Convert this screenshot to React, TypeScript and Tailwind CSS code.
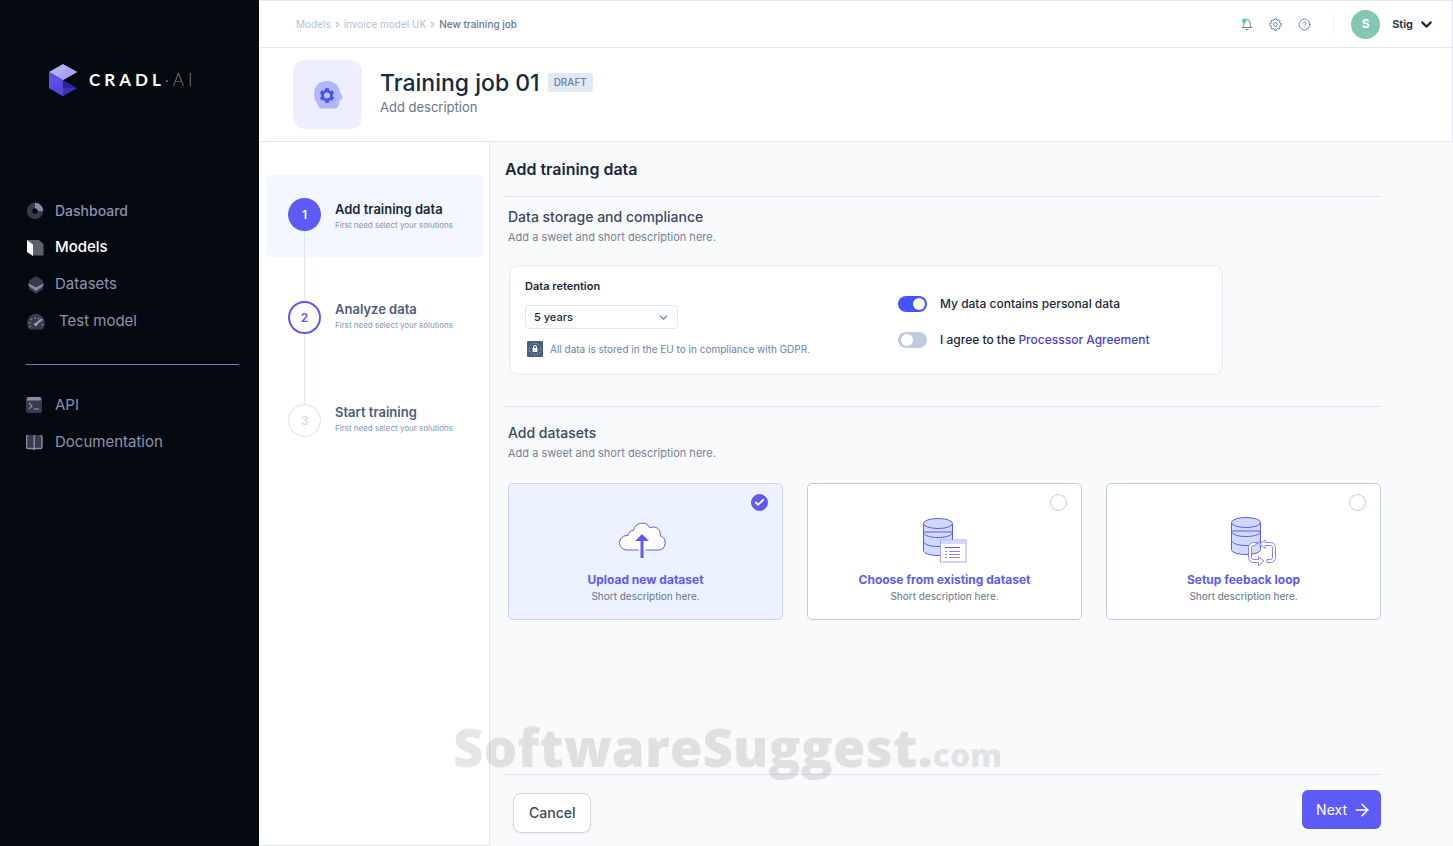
import { useState } from "react";
import type { ReactNode } from "react";
import clsx from "clsx";
import { ArrowRight, Check, ChevronDown, ChevronRight, CircleHelp } from "lucide-react";

type StepState = "active" | "next" | "upcoming";

interface Step {
  title: string;
  state: StepState;
}

interface DatasetOption {
  id: string;
  title: string;
  icon: ReactNode;
}

// Closed outline of a cog, centred on (cx, cy)
function cogPath(cx: number, cy: number, teeth: number, outer: number, inner: number) {
  const points: string[] = [];
  const step = (Math.PI * 2) / teeth;
  for (let i = 0; i < teeth; i++) {
    const a = i * step - Math.PI / 2;
    const corners: [number, number][] = [
      [inner, a - step * 0.3],
      [outer, a - step * 0.2],
      [outer, a + step * 0.2],
      [inner, a + step * 0.3],
    ];
    corners.forEach(([r, t]) => {
      points.push(`${(cx + r * Math.cos(t)).toFixed(2)} ${(cy + r * Math.sin(t)).toFixed(2)}`);
    });
  }
  return `M${points.join("L")}Z`;
}

function LogoMark() {
  return (
    <svg width="28" height="32" viewBox="0 0 28 32" aria-hidden="true">
      <path d="M14 0 28 8 14 16 0 8Z" fill="#b4aff5" />
      <path d="M14 16 8 12 20 3.5 28 8Z" fill="#a9a3f1" />
      <path d="M0 8 14 16V32L0 24Z" fill="#5a50ea" />
      <path d="M0 24 14 16V32Z" fill="#5348df" />
      <path d="M14 16 28 24 14 32Z" fill="#2c2496" />
      <path d="M14 24H28L14 32Z" fill="#3d33b8" />
    </svg>
  );
}

const navIcons = {
  dashboard: (
    <svg width="18" height="18" viewBox="0 0 18 18" aria-hidden="true">
      <circle cx="9" cy="9" r="5.5" fill="none" stroke="#363c4e" strokeWidth="5.4" />
      <path d="M9 3.5A5.5 5.5 0 0 1 14.5 9" fill="none" stroke="#8a8ca8" strokeWidth="5.4" />
    </svg>
  ),
  models: (
    <svg width="18" height="18" viewBox="0 0 18 18" aria-hidden="true">
      <path d="M1 1H13L17.5 5V16.5H7L1 12Z" fill="#5c606d" />
      <path d="M1 1 7 5.5V17L1 13Z" fill="#fff" />
    </svg>
  ),
  datasets: (
    <svg width="18" height="18" viewBox="0 0 18 18" aria-hidden="true">
      <path d="M10 0 17 4.5V13L10 18 3 13V4.5Z" fill="#363c4e" />
      <path d="M2.5 7.5 10 11.5 17.5 7.5V9.8L10 15 2.5 9.8Z" fill="#8a8ca8" />
    </svg>
  ),
  test: (
    <svg width="22" height="18" viewBox="0 0 22 18" aria-hidden="true">
      <path d="M4 16.5A9 9 0 1 1 16 16.5Z" fill="#363c4e" />
      <path d="M4 14.2A6.6 6.6 0 1 1 16 14.2" fill="none" stroke="#8a8ca8" strokeWidth="1.6" strokeDasharray="1.3 2.5" />
      <path d="M9.5 11.5 15.5 6.5" stroke="#a0a2ba" strokeWidth="1.8" strokeLinecap="round" />
      <circle cx="9.7" cy="11.3" r="1.6" fill="#a0a2ba" />
    </svg>
  ),
  api: (
    <svg width="18" height="18" viewBox="0 1 18 18" aria-hidden="true">
      <rect width="16" height="16" y="1" rx="2" fill="#363c4e" />
      <path d="M1 4.5V3A2 2 0 0 1 3 1H13A2 2 0 0 1 15 3V4.5Z" fill="#8a8ca8" />
      <path d="M3 7 6 10 3 13" fill="none" stroke="#8a8ca8" strokeWidth="1.3" />
      <path d="M8 13H13" stroke="#8a8ca8" strokeWidth="1.3" />
    </svg>
  ),
  docs: (
    <svg width="18" height="18" viewBox="0 1 18 18" aria-hidden="true">
      <path d="M1 2H7L8 3 9 2H15L16 3V15.5H0V3Z" fill="#363c4e" />
      <path
        d="M2 2.5C1 2.8.5 3.3.5 4V14C.5 15 1 15.5 2 15.5H6.5L8 16.5 9.5 15.5H14.5C15.5 15.5 16 15 16 14V4C16 3.3 15.5 2.8 14.5 2.5M8.2 2V16"
        fill="none"
        stroke="#8a8ca8"
        strokeWidth="1.4"
      />
    </svg>
  ),
};

const mainNav = [
  { label: "Dashboard", icon: navIcons.dashboard, className: "text-sm font-medium text-[#8f91ad]" },
  { label: "Models", icon: navIcons.models, className: "text-[15px] font-medium text-white" },
  { label: "Datasets", icon: navIcons.datasets, className: "text-[15px] text-[#8f91ad]" },
  { label: "Test model", icon: navIcons.test, className: "text-[15px] text-[#8f91ad]" },
];

const helpNav = [
  { label: "API", icon: navIcons.api, className: "text-[15px] text-[#8f91ad]" },
  { label: "Documentation", icon: navIcons.docs, className: "text-[15px] text-[#8f91ad]" },
];

function NavList({ items }: { items: typeof mainNav }) {
  return (
    <ul>
      {items.map((item) => (
        <li key={item.label}>
          <a href="#" className={clsx("flex h-[37px] items-center gap-[11px]", item.className)}>
            {item.icon}
            {item.label}
          </a>
        </li>
      ))}
    </ul>
  );
}

function Sidebar() {
  return (
    <aside className="w-[259px] shrink-0 bg-[#050910]">
      <a href="#" className="flex items-center gap-3 pt-16 pl-[49px] font-['Lato',sans-serif]">
        <LogoMark />
        <span className="flex items-center text-[17px] leading-8 tracking-[4px] whitespace-nowrap">
          <b className="font-bold text-white">CRADL</b>
          <span className="font-light text-[#7d808a]">·AI</span>
        </span>
      </a>
      <nav className="mt-24 px-5 pl-[26px]">
        <NavList items={mainNav} />
        <hr className="mt-6 mb-[22px] border-[#6b83a8]" />
        <NavList items={helpNav} />
      </nav>
    </aside>
  );
}

function BellIcon() {
  return (
    <svg width="12" height="13" viewBox="0 0 12 13" aria-hidden="true">
      <path
        d="M1 9.5H11M2.2 9.5C2.8 8.5 2.7 7 2.8 5A3.2 3.4 0 0 1 9.2 5C9.3 7 9.2 8.5 9.8 9.5M5 11.5H7"
        fill="none"
        stroke="#6b83a8"
        strokeWidth="1"
        strokeLinecap="round"
      />
      <circle cx="3.2" cy="2.8" r="2.2" fill="#3ddc97" />
    </svg>
  );
}

function CogIcon() {
  return (
    <svg width="13" height="13" viewBox="0 0 13 13" aria-hidden="true">
      <g fill="none" stroke="#6b83a8" strokeLinejoin="round">
        <path d={cogPath(6.5, 6.5, 8, 5.8, 4.7)} />
        <circle cx="6.5" cy="6.5" r="1.8" />
      </g>
    </svg>
  );
}

function TopBar() {
  return (
    <div className="flex h-[47px] items-center justify-between border-b border-[#e1e8f3] pr-[17px] pl-[37px]">
      <nav aria-label="Breadcrumb" className="flex items-center text-[10px] text-[#b3bfd2]">
        <a href="#">Models</a>
        <ChevronRight size={9} strokeWidth={3} className="mx-[2px]" />
        <a href="#">invoice model UK</a>
        <ChevronRight size={9} strokeWidth={3} className="mx-[2px]" />
        <span className="font-medium text-[#64799c]">New training job</span>
      </nav>
      <div className="flex items-center">
        <div className="flex items-center gap-4">
          <button aria-label="Notifications">
            <BellIcon />
          </button>
          <button aria-label="Settings">
            <CogIcon />
          </button>
          <button aria-label="Help" className="text-[#6b83a8]">
            <CircleHelp size={13} strokeWidth={1.8} />
          </button>
        </div>
        <span className="mr-[17px] ml-[22px] h-[26px] w-px bg-[#edf1f7]" />
        <button className="flex items-center text-[11px] font-semibold text-[#1b2a41]">
          <span className="mr-3 flex size-[29px] items-center justify-center rounded-full bg-[#84c5b4] text-xs font-bold text-white">
            S
          </span>
          Stig
          <ChevronDown size={17} strokeWidth={3} className="ml-[5px]" />
        </button>
      </div>
    </div>
  );
}

function JobHeader() {
  return (
    <div className="flex h-[94px] items-center gap-[18px] border-b border-[#e1e8f3] pl-[34px]">
      <div className="flex size-[69px] items-center justify-center rounded-xl bg-[#edefff]">
        <svg width="30" height="28" viewBox="0 0 30 28" aria-hidden="true">
          <path
            d="M14 0C22 0 26.500 5 27 11.500L29.500 15.500C30 17 29.500 18 28 18.500L26.500 19.500C26.500 23.500 25 27.500 22.500 27.500H8.500C6.500 27.500 5.500 26 4.500 23C2 20 1 17 1 13.500C1 5 6 0 14 0Z"
            fill="#b1b8ff"
          />
          <path d={cogPath(14, 14.5, 6, 7, 5.4)} fill="#4353ff" stroke="#4353ff" strokeLinejoin="round" />
          <circle cx="14" cy="14.5" r="3" fill="#c3c8ff" />
        </svg>
      </div>
      <div className="pb-1">
        <div className="flex items-center gap-2">
          <h1 className="text-[23px] leading-7 font-medium text-[#172940]">Training job 01</h1>
          <span className="rounded-[3px] bg-[#e1e9f4] px-[6px] text-[10px] leading-[19px] font-medium text-[#6b83a8]">
            DRAFT
          </span>
        </div>
        <p className="text-[13px] leading-5 text-[#66758c]">Add description</p>
      </div>
    </div>
  );
}

const steps: Step[] = [
  { title: "Add training data", state: "active" },
  { title: "Analyze data", state: "next" },
  { title: "Start training", state: "upcoming" },
];

const circleStyles: Record<StepState, string> = {
  active: "bg-[#5e5af7] text-white",
  next: "border-2 border-[#5e5af7] bg-white text-[#5e5af7]",
  upcoming: "border border-[#d8e1ee] bg-white text-[#d3dcea]",
};

function StepList() {
  return (
    <ol className="w-[231px] shrink-0 border-r border-b border-[#e1e8f3] bg-white pt-[33px] pr-[6px] pl-[7px]">
      {steps.map((step, i) => (
        <li key={step.title} className="grid h-[103px] grid-cols-1">
          {step.state === "active" && (
            <span className="col-start-1 row-start-1 h-[82px] rounded bg-[#f4f7ff]" />
          )}
          <div className="col-start-1 row-start-1 flex gap-[14px] pt-[23px] pl-[22px]">
            <div className="flex flex-col items-center">
              <span
                className={clsx(
                  "flex size-[33px] shrink-0 items-center justify-center rounded-full text-xs font-semibold",
                  circleStyles[step.state]
                )}
              >
                {i + 1}
              </span>
              {i < steps.length - 1 && <span className="h-[70px] w-px shrink-0 bg-[#dfe6f3]" />}
            </div>
            <div className={clsx(step.state === "active" && "pt-[3px]")}>
              <h3
                className={clsx(
                  "text-[13px] leading-4 font-semibold",
                  step.state === "active" ? "text-[#172940]" : "text-[#4b5d7c]"
                )}
              >
                {step.title}
              </h3>
              <p className="mt-[2px] text-[8px] leading-3 whitespace-nowrap text-[#8296b8]">
                First need select your solutions
              </p>
            </div>
          </div>
        </li>
      ))}
    </ol>
  );
}

function Toggle({ id, checked, onChange, children }: { id: string; checked: boolean; onChange: () => void; children: ReactNode }) {
  return (
    <div className="flex h-4 items-center gap-[13px]">
      <input
        id={id}
        type="checkbox"
        role="switch"
        checked={checked}
        onChange={onChange}
        className="h-4 w-[29px] shrink-0 cursor-pointer appearance-none rounded-full bg-[#c0cbdd] px-[3px] py-[2px] before:block before:size-3 before:rounded-full before:bg-white checked:bg-[#4353ff] checked:pl-[15px]"
      />
      <label htmlFor={id} className="text-xs font-medium text-[#172940]">
        {children}
      </label>
    </div>
  );
}

function GdprIcon() {
  return (
    <svg width="16" height="16" viewBox="0 0 16 16" aria-hidden="true">
      <rect width="16" height="16" rx="1" fill="#4b5d7c" />
      <circle cx="8" cy="8" r="5.8" fill="none" stroke="#d5ddea" strokeWidth="1" strokeDasharray="1 2.03" />
      <rect x="5.5" y="7" width="5" height="4" fill="#fff" />
      <path d="M6.5 7V6A1.5 1.5 0 0 1 9.5 6V7" fill="none" stroke="#fff" />
    </svg>
  );
}

function StorageCard() {
  const [personal, setPersonal] = useState(true);
  const [agreed, setAgreed] = useState(false);

  return (
    <div className="mt-5 ml-[5px] flex h-[110px] max-w-[714px] rounded-[10px] border border-[#e1e8f6] bg-white">
      <div className="w-[388px] pt-3 pl-[15px]">
        <label htmlFor="retention" className="block text-[11px] leading-4 font-semibold text-[#172940]">
          Data retention
        </label>
        <div className="mt-[11px] grid w-[153px] items-center">
          <select
            id="retention"
            defaultValue="5"
            className="col-start-1 row-start-1 h-6 appearance-none rounded border border-[#dfe6f1] bg-white pl-2 text-[11px] font-medium text-[#172940]"
          >
            <option value="1">1 year</option>
            <option value="5">5 years</option>
            <option value="10">10 years</option>
          </select>
          <ChevronDown
            size={13}
            strokeWidth={2.5}
            className="pointer-events-none col-start-1 row-start-1 mr-2 justify-self-end text-[#6b83a8]"
          />
        </div>
        <p className="mt-3 flex items-center gap-[7px] pl-[2px] text-[10px] leading-4 whitespace-nowrap text-[#6b83a8]">
          <GdprIcon />
          All data is stored in the EU to in compliance with GDPR.
        </p>
      </div>
      <div className="flex flex-col gap-5 pt-[30px]">
        <Toggle id="personal" checked={personal} onChange={() => setPersonal(!personal)}>
          My data contains personal data
        </Toggle>
        <Toggle id="agree" checked={agreed} onChange={() => setAgreed(!agreed)}>
          I agree to the{" "}
          <a href="#" className="text-[#4a3fd0]">
            Processsor Agreement
          </a>
        </Toggle>
      </div>
    </div>
  );
}

function Cylinder() {
  return (
    <g stroke="#5e5af7" fill="none">
      <path d="M.5 5.5V32.5C.5 35.5 7 37.5 15 37.5S29.5 35.5 29.5 32.5V5.5Z" fill="#d0dafc" />
      <ellipse cx="15" cy="5.5" rx="14.5" ry="5" fill="#d0dafc" />
      <path d="M.5 14H29.5M.5 15C2 18 8 19.5 15 19.5S28 18 29.5 15M.5 23.5C2 27 8 28.5 15 28.5S28 27 29.5 23.5" />
    </g>
  );
}

const options: DatasetOption[] = [
  {
    id: "upload",
    title: "Upload new dataset",
    icon: (
      <svg width="56" height="40" viewBox="0 -1 56 40" aria-hidden="true">
        <path
          d="M20.5 28H8A7.3 7.3 0 0 1 8 13.5H10C10.3 10.5 12.5 8.5 15.5 8.3A8.8 8.8 0 0 1 32 6C38 3 43 7.5 42.3 14A7.2 7.2 0 0 1 40.5 28H27.5"
          fill="#fff"
          stroke="#5e5af7"
        />
        <path d="M24 12 31 19H25.5V36H22.5V19H17Z" fill="#5e5af7" />
      </svg>
    ),
  },
  {
    id: "existing",
    title: "Choose from existing dataset",
    icon: (
      <svg width="44" height="46" viewBox="0 0 44 46" aria-hidden="true">
        <Cylinder />
        <rect x="17.5" y="22" width="25.5" height="22" fill="#fff" stroke="#a5a2fa" />
        <rect x="18" y="22.5" width="24.5" height="3.5" fill="#d0dafc" />
        <path d="M22 29.5H37" stroke="#5e5af7" />
        <path d="M22 33.5H24M26 33.5H37M22 36.5H24M26 36.5H37M22 39.5H24M26 39.5H37" stroke="#8683f9" />
      </svg>
    ),
  },
  {
    id: "feedback",
    title: "Setup feeback loop",
    icon: (
      <svg width="65" height="52" viewBox="-20 -2 65 52" aria-hidden="true">
        <Cylinder />
        <g stroke="#8683f9" strokeWidth="1" fill="#fff" strokeLinejoin="round">
          <path d="M26 25.5H22.5A5 5 0 0 0 17.5 30.5V40.5A5 5 0 0 0 22.5 45.5H27.5V48.5L33 44 27.5 39.5V42.5H22.5A2 2 0 0 1 20.5 40.5V30.5A2 2 0 0 1 22.5 28.5H24Z" />
          <path d="M36 45.5H39.5A5 5 0 0 0 44.5 40.5V30.5A5 5 0 0 0 39.5 25.5H34V23L28.5 27 34 31.5V28.5H39.5A2 2 0 0 1 41.5 30.5V40.5A2 2 0 0 1 39.5 42.5H36Z" />
        </g>
      </svg>
    ),
  },
];

function DatasetPicker() {
  const [selected, setSelected] = useState("upload");

  return (
    <div className="mt-[22px] ml-1 grid grid-cols-3 gap-6">
      {options.map((option) => (
        <label
          key={option.id}
          className={clsx(
            "relative flex h-[137px] cursor-pointer flex-col items-center rounded-[5px] border pt-[29px]",
            selected === option.id ? "border-[#c7d1fb] bg-[#ecf2ff]" : "border-[#c0cbdd] bg-white"
          )}
        >
          <input
            type="radio"
            name="dataset"
            checked={selected === option.id}
            onChange={() => setSelected(option.id)}
            className="absolute top-[10px] right-[14px] size-[17px] appearance-none rounded-full border border-[#c0cbdd] bg-white checked:border-[#5e5af7] checked:bg-[#5e5af7]"
          />
          {selected === option.id && (
            <Check
              size={11}
              strokeWidth={4}
              className="pointer-events-none absolute top-[13px] right-[17px] text-white"
            />
          )}
          <span className="flex h-14 items-center">{option.icon}</span>
          <span className="mt-[3px] text-xs leading-4 font-bold text-[#5e5af7]">{option.title}</span>
          <span className="text-[10px] leading-4 text-[#66758c]">Short description here.</span>
        </label>
      ))}
    </div>
  );
}

function SectionTitle({ children }: { children: ReactNode }) {
  return (
    <div className="pl-1">
      <h3 className="text-sm leading-5 font-medium text-[#3a4961]">{children}</h3>
      <p className="mt-[2px] text-[11px] leading-4 text-[#738096]">Add a sweet and short description here.</p>
    </div>
  );
}

export default function App() {
  return (
    <div className="relative flex min-h-screen bg-[#f9fafc] font-['Inter',sans-serif]">
      <Sidebar />
      <div className="flex min-w-0 flex-1 flex-col">
        <header className="border-t border-r border-[#e1e8f3] bg-white">
          <TopBar />
          <JobHeader />
        </header>
        <div className="flex flex-1">
          <StepList />
          <main className="flex min-w-0 flex-1 flex-col pr-[72px] pl-[14px]">
            <h2 className="pt-[15px] pb-[15px] pl-px text-base leading-6 font-semibold text-[#172940]">Add training data</h2>
            <section className="border-t border-[#e1e6ed] pt-[10px] pb-[31px]">
              <SectionTitle>Data storage and compliance</SectionTitle>
              <StorageCard />
            </section>
            <section className="border-t border-[#e1e6ed] pt-4 pb-8">
              <SectionTitle>Add datasets</SectionTitle>
              <DatasetPicker />
            </section>
            <footer className="mt-auto flex items-start justify-between border-t border-[#e1e6ed] pt-[15px] pb-[13px] pl-[9px]">
              <button className="mt-[3px] h-10 rounded-lg border border-[#d0d4de] bg-white px-[15px] text-sm font-medium text-[#3a4961] shadow-xs">
                Cancel
              </button>
              <button className="flex h-[39px] items-center gap-[5px] rounded-md bg-[#5e5af7] pr-[9px] pl-[14px] text-sm text-white">
                Next
                <ArrowRight size={20} strokeWidth={1.8} />
              </button>
            </footer>
          </main>
        </div>
      </div>
      <div className="pointer-events-none absolute bottom-[59px] left-[453px] font-['Open_Sans',sans-serif] text-[53px] leading-[64px] font-extrabold whitespace-nowrap text-black/10">
        SoftwareSuggest.<span className="text-[32px]">com</span>
      </div>
    </div>
  );
}
